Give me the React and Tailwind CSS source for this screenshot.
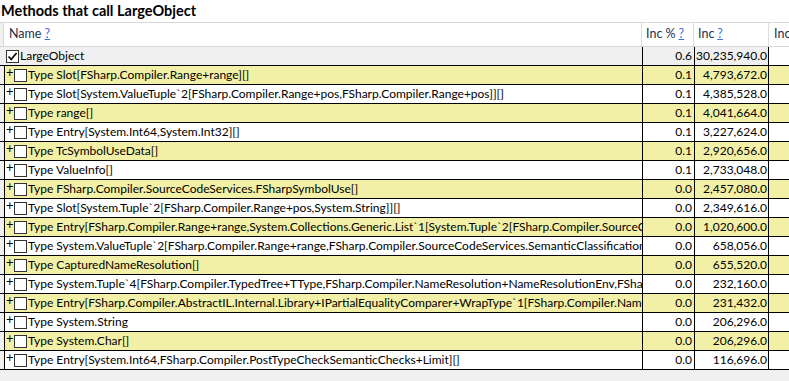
const rows = [
  ['Type Slot[FSharp.Compiler.Range+range][]', '0.1', '4,793,672.0'],
  ['Type Slot[System.ValueTuple`2[FSharp.Compiler.Range+pos,FSharp.Compiler.Range+pos]][]', '0.1', '4,385,528.0'],
  ['Type range[]', '0.1', '4,041,664.0'],
  ['Type Entry[System.Int64,System.Int32][]', '0.1', '3,227,624.0'],
  ['Type TcSymbolUseData[]', '0.1', '2,920,656.0'],
  ['Type ValueInfo[]', '0.1', '2,733,048.0'],
  ['Type FSharp.Compiler.SourceCodeServices.FSharpSymbolUse[]', '0.0', '2,457,080.0'],
  ['Type Slot[System.Tuple`2[FSharp.Compiler.Range+pos,System.String]][]', '0.0', '2,349,616.0'],
  ['Type Entry[FSharp.Compiler.Range+range,System.Collections.Generic.List`1[System.Tuple`2[FSharp.Compiler.SourceCodeServices.SymbolUse]]][]', '0.0', '1,020,600.0'],
  ['Type System.ValueTuple`2[FSharp.Compiler.Range+range,FSharp.Compiler.SourceCodeServices.SemanticClassificationType][]', '0.0', '658,056.0'],
  ['Type CapturedNameResolution[]', '0.0', '655,520.0'],
  ['Type System.Tuple`4[FSharp.Compiler.TypedTree+TType,FSharp.Compiler.NameResolution+NameResolutionEnv,FSharp.Compiler.Range+range]', '0.0', '232,160.0'],
  ['Type Entry[FSharp.Compiler.AbstractIL.Internal.Library+IPartialEqualityComparer+WrapType`1[FSharp.Compiler.NameResolution+Item]]', '0.0', '231,432.0'],
  ['Type System.String', '0.0', '206,296.0'],
  ['Type System.Char[]', '0.0', '206,296.0'],
  ['Type Entry[System.Int64,FSharp.Compiler.PostTypeCheckSemanticChecks+Limit][]', '0.0', '116,696.0'],
];

const Help = () => <span className="text-[#3b6fd6] underline ml-[3px]">?</span>;

const Checkbox = ({ checked }) => (
  <span className="inline-flex w-[13px] h-[13px] border border-[#333] bg-white shrink-0 items-center justify-center">
    {checked && (
      <svg width="11" height="11" viewBox="0 0 11 11">
        <path d="M1.5 5.5 L4.2 8.3 L9.6 2" fill="none" stroke="#111" strokeWidth="1.8" />
      </svg>
    )}
  </span>
);

// ligne de type (expandable, non cochée)
const Row = ({ name, pct, inc, bg }) => (
  <div className={`flex h-[19px] border-b border-black ${bg}`}>
    <div className="w-[4px] shrink-0 bg-[#f0f0f0]" />
    <div className="w-[639px] shrink-0 border-l border-r border-black flex items-center overflow-hidden whitespace-nowrap">
      <span className="ml-[1px] w-[8px] shrink-0 self-start leading-[12px] text-[13px]">+</span>
      <Checkbox />
      <span className="ml-[1px] shrink-0">{name}</span>
    </div>
    <div className="w-[52px] shrink-0 border-r border-black flex items-center justify-end pr-[2px]">{pct}</div>
    <div className="w-[74px] shrink-0 border-r border-black flex items-center justify-end pr-[1px] whitespace-nowrap">{inc}</div>
    <div className="flex-1" />
  </div>
);

export default function App() {
  return (
    <div className="w-[789px] h-[381px] bg-[#f0f0f0] text-black text-[12px] overflow-hidden" style={{ fontFamily: 'Lato, "Liberation Sans", sans-serif' }}>
      <div className="h-[22px] bg-white pl-[1px] font-bold text-[14.5px] leading-[22px] text-black">
        Methods that call LargeObject
      </div>
      <div className="flex h-[25px] bg-white border-t border-b border-[#d8d8d8] text-[#262f4a] text-[12.5px]">
        <div className="w-[4px] shrink-0 bg-[#f0f0f0] border-r border-[#d8d8d8]" />
        <div className="w-[638px] shrink-0 border-r border-[#dcdcdc] flex items-center pl-[5px]">
          Name<Help />
        </div>
        <div className="w-[52px] shrink-0 border-r border-[#dcdcdc] flex items-center pl-[4px]">
          Inc %<Help />
        </div>
        <div className="w-[75px] shrink-0 border-r border-[#dcdcdc] flex items-center pl-[4px]">
          Inc<Help />
        </div>
        <div className="flex-1 flex items-center pl-[5px] overflow-hidden whitespace-nowrap">Inc</div>
      </div>
      <div className="flex h-[19px] border-b border-black bg-[#f0f0f0]">
        <div className="w-[4px] shrink-0 bg-[#f0f0f0]" />
        <div className="w-[639px] shrink-0 border-r border-black flex items-center pl-[2px]">
          <Checkbox checked />
          <span className="ml-[1px]">LargeObject</span>
        </div>
        <div className="w-[52px] shrink-0 border-r border-black flex items-center justify-end pr-[2px]">0.6</div>
        <div className="w-[74px] shrink-0 border-r border-black flex items-center justify-end pr-[1px] whitespace-nowrap">30,235,940.0</div>
        <div className="flex-1 bg-white" />
      </div>
      {rows.map(([name, pct, inc], i) => (
        <Row key={i} name={name} pct={pct} inc={inc} bg={i % 2 === 0 ? 'bg-[#f2f0a6]' : 'bg-white'} />
      ))}
    </div>
  );
}
